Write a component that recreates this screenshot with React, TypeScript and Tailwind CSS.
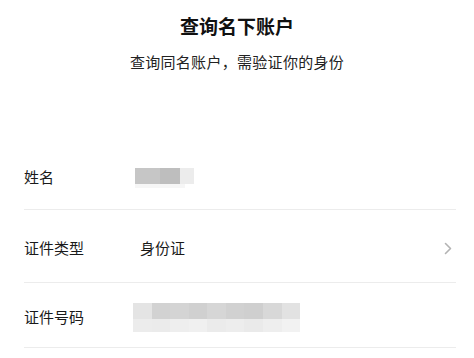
import React from "react";

const font = { fontFamily: '"Noto Sans CJK SC", "Noto Sans", sans-serif' };

function Chevron() {
  return (
    <svg width="8" height="13" viewBox="0 0 8 13" fill="none">
      <path d="M1.5 1.5 L6.5 6.5 L1.5 11.5" stroke="#b3b3b3" strokeWidth="1.6" strokeLinecap="round" strokeLinejoin="round" />
    </svg>
  );
}

export default function App() {
  const idTop = ["#e4e4e4", "#d2d2d2", "#d4d4d4", "#d0d0d0", "#d6d6d6", "#d1d1d1", "#cfcfcf", "#d8d8d8", "#e2e2e2"];
  const idBot = ["#ececec", "#ebebeb", "#eeeeee", "#f0f0f0", "#ebebeb", "#ededed", "#eaeaea", "#eeeeee", "#f2f2f2"];
  return (
    <div className="w-[474px] h-[358px] bg-white overflow-hidden text-[#1a1a1a]" style={font}>
      <div className="flex flex-col items-center pt-[12px]">
        <div className="text-[19px] font-bold leading-[28px] text-[#111]">查询名下账户</div>
        <div className="mt-[11px] text-[15px] leading-[22px] text-[#222] tracking-[0.3px]">查询同名账户，需验证你的身份</div>
      </div>
      <div className="mt-[68px] ml-[24px] mr-[18px]">
        <div className="h-[69px] pt-[5px] flex items-center border-b border-[#ececec]">
          <div className="w-[111px] text-[15px]">姓名</div>
          <div className="flex flex-col">
            <div className="flex h-[16px]">
              <div className="w-[25px] bg-[#c6c6c6]" />
              <div className="w-[20px] bg-[#bebebe]" />
              <div className="w-[14px] bg-[#ececec]" />
            </div>
            <div className="h-[4px] w-[50px] bg-[#f6f6f6]" />
          </div>
        </div>
        <div className="h-[73px] pt-[4px] flex items-center border-b border-[#ececec]">
          <div className="w-[116px] text-[15px]">证件类型</div>
          <div className="flex-1 text-[15px]">身份证</div>
          <div className="mr-[4px]"><Chevron /></div>
        </div>
        <div className="h-[65px] pt-[4px] flex items-center border-b border-[#ececec]">
          <div className="w-[109px] text-[15px]">证件号码</div>
          <div className="flex flex-col w-[167px]">
            <div className="flex h-[16px]">
              {idTop.map((c, i) => (
                <div key={i} className="flex-1" style={{ background: c }} />
              ))}
            </div>
            <div className="flex h-[13px]">
              {idBot.map((c, i) => (
                <div key={i} className="flex-1" style={{ background: c }} />
              ))}
            </div>
          </div>
        </div>
      </div>
    </div>
  );
}
